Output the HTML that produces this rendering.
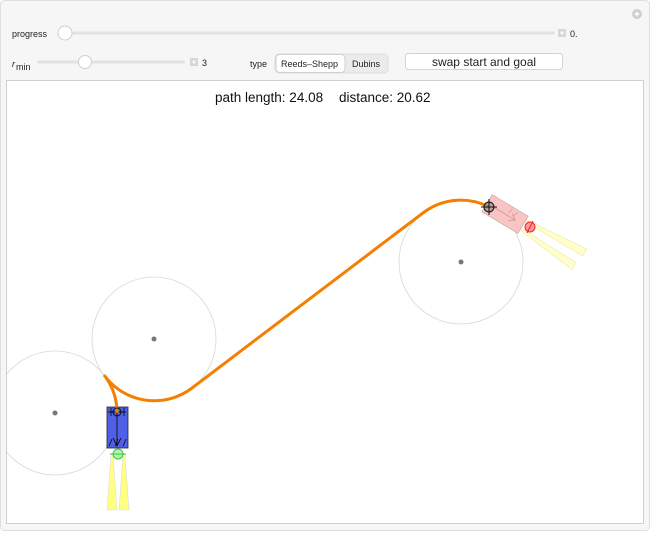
<!DOCTYPE html>
<html><head><meta charset="utf-8"><style>
body{margin:0;width:650px;height:531px;background:#fff;font-family:"Liberation Sans",sans-serif;overflow:hidden}
</style></head><body>
<svg width="650" height="531" viewBox="0 0 650 531" xmlns="http://www.w3.org/2000/svg" font-family="Liberation Sans, sans-serif">
<defs><clipPath id="c"><rect x="7" y="81" width="636" height="442"/></clipPath></defs>
<rect x="0.5" y="0.5" width="649" height="530" rx="4" fill="#f6f6f6" stroke="#dedede"/>
<circle cx="637" cy="14" r="5" fill="#cfcfcf"/><path d="M634.5 14h5M637 11.5v5" stroke="#fff" stroke-width="1.3"/>
<text x="12" y="37" font-size="9" fill="#222">progress</text>
<rect x="60" y="31.5" width="495" height="3" rx="1.5" fill="#e2e2e2"/>
<circle cx="65" cy="33" r="7" fill="#fff" stroke="#cfcfcf"/>
<rect x="558" y="29" width="8" height="8" fill="#d6d6d6"/><path d="M560 33h4M562 31v4" stroke="#fff"/>
<text x="570" y="37" font-size="9" fill="#222">0.</text>
<text x="12" y="67" font-size="9" font-style="italic" fill="#222">r</text><text x="16" y="70" font-size="9" fill="#222">min</text>
<rect x="37" y="60.5" width="148" height="3" rx="1.5" fill="#e2e2e2"/>
<circle cx="85" cy="62" r="6.5" fill="#fff" stroke="#cfcfcf"/>
<rect x="190" y="58" width="8" height="8" fill="#d6d6d6"/><path d="M192 62h4M194 60v4" stroke="#fff"/>
<text x="202" y="66" font-size="9" fill="#222">3</text>
<text x="250" y="67" font-size="9" fill="#222">type</text>
<rect x="275" y="54" width="113" height="19" rx="4" fill="#ebebeb" stroke="#ddd"/>
<rect x="276" y="54.5" width="69" height="18" rx="4" fill="#fff" stroke="#d0d0d0"/>
<text x="281" y="67" font-size="9" fill="#222">Reeds–Shepp</text>
<text x="352" y="67" font-size="9" fill="#222">Dubins</text>
<rect x="405.5" y="53.5" width="157" height="16" rx="3" fill="#fff" stroke="#d4d4d4"/>
<text x="484" y="66" font-size="12" fill="#222" text-anchor="middle">swap start and goal</text>
<rect x="6.5" y="80.5" width="637" height="443" fill="#fff" stroke="#d0d0d0"/>
<text x="215" y="102" font-size="13.5" fill="#111">path length: 24.08</text>
<text x="339" y="102" font-size="13.5" fill="#111">distance: 20.62</text>
<g clip-path="url(#c)">
<g fill="none" stroke="#d8d8d8" stroke-width="0.8">
<circle cx="55" cy="413" r="62"/><circle cx="154" cy="339" r="62"/><circle cx="461" cy="262" r="62"/></g>
</g>
<g fill="#777"><circle cx="55" cy="413" r="2.5"/><circle cx="154" cy="339" r="2.5"/><circle cx="461" cy="262" r="2.5"/></g>
<polygon points="107,510 117,510 113,455 111,455" fill="#ffff80" stroke="#ddd" stroke-width="0.6"/>
<polygon points="119,510 129,510 125,455 123,455" fill="#ffff80" stroke="#ddd" stroke-width="0.6"/>
<rect x="107" y="407" width="21" height="41" fill="#4e5fe8" stroke="#223" stroke-width="0.8"/>
<path d="M112 439l-3 7M118 439l-3 7M126 439l-3 7M117 412v34M113 438l4 8 4-8M108 412h18M111 408v8M124 408v8" stroke="#111" stroke-width="0.9" fill="none"/>
<circle cx="118" cy="454" r="5" fill="#b8f0b8" stroke="#3c3" stroke-width="1"/><path d="M110 454h16" stroke="#3c3"/>
<g transform="translate(505 214) rotate(31)">
<polygon points="21,-6 88,-12 88,-4 21,-4" fill="#ffffcc" stroke="#eee8a0" stroke-width="0.6"/>
<polygon points="21,4 86,5 86,13 21,6" fill="#ffffcc" stroke="#eee8a0" stroke-width="0.6"/>
<rect x="-21" y="-10" width="42" height="20" fill="#f8c4c4" stroke="#caa" stroke-width="0.7"/>
<path d="M-15 0H12M6 -4l6 4-6 4M4 -8l-2 5M10 -8l-2 5" stroke="#c99" stroke-width="0.8" fill="none"/>
</g>
<path d="M117 413A62 62 0 0 0 104 375A62 62 0 0 0 191.4 388.5L423.6 212.5A62 62 0 0 1 489 207" fill="none" stroke="#f57f00" stroke-width="3"/>
<circle cx="530" cy="227" r="5" fill="#f99" stroke="#e22"/><path d="M527 233l6-12" stroke="#e22"/>
<circle cx="489" cy="207" r="5" fill="#888" fill-opacity="0.6" stroke="#111"/><path d="M481 207h16M489 199v16" stroke="#111"/>
<circle cx="117" cy="412" r="4" fill="none" stroke="#111"/>
</svg>
</body></html>
